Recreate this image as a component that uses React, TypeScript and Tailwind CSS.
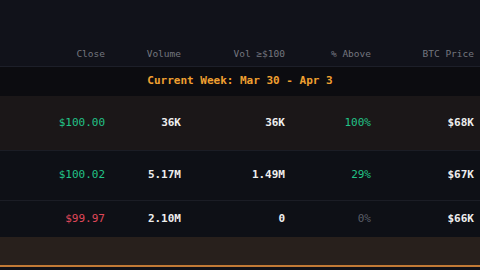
import React from 'react';

type Row = {
  close: string;
  up: boolean;
  volume: string;
  volAbove: string;
  pct: string;
  pctTone: 'up' | 'none';
  btc: string;
  height: string;
  bg: string;
};

const ROWS: Row[] = [
  { close: '$100.00', up: true, volume: '36K', volAbove: '36K', pct: '100%', pctTone: 'up', btc: '$68K', height: 'h-[55px]', bg: 'bg-[#1b1718]' },
  { close: '$100.02', up: true, volume: '5.17M', volAbove: '1.49M', pct: '29%', pctTone: 'up', btc: '$67K', height: 'h-[50px]', bg: 'bg-[#0e1016]' },
  { close: '$99.97', up: false, volume: '2.10M', volAbove: '0', pct: '0%', pctTone: 'none', btc: '$66K', height: 'h-[36px]', bg: 'bg-[#0e1016]' },
];

const COLS = 'grid grid-cols-[105px_76px_104px_86px_103px] items-center text-right';

export default function App() {
  return (
    <div
      className="w-[480px] h-[270px] overflow-hidden bg-[#11121a] flex flex-col"
      style={{ fontFamily: '"DejaVu Sans Mono", "Liberation Mono", monospace' }}
    >
      <div className={`${COLS} h-[67px] shrink-0 pt-[43px] text-[9.5px] text-[#74767f] border-b border-[#1d1f29]`}>
        <span>Close</span>
        <span>Volume</span>
        <span>Vol ≥$100</span>
        <span>% Above</span>
        <span>BTC Price</span>
      </div>

      <div className="h-[29px] shrink-0 bg-[#0c0c10] flex items-center justify-center text-[11px] font-bold text-[#f0a030]">
        Current Week: Mar 30 - Apr 3
      </div>

      {ROWS.map((r, i) => (
        <div
          key={i}
          className={`${COLS} ${r.height} shrink-0 ${r.bg} text-[11px] ${i < ROWS.length - 1 ? 'border-b border-[#1b1d25]' : ''}`}
        >
          <span className={r.up ? 'text-[#22c287]' : 'text-[#e0485a]'}>{r.close}</span>
          <span className="text-[#eeeeee] font-semibold">{r.volume}</span>
          <span className="text-[#eeeeee] font-semibold">{r.volAbove}</span>
          <span className={r.pctTone === 'up' ? 'text-[#22c287]' : 'text-[#5b5e68]'}>{r.pct}</span>
          <span className="text-[#eeeeee] font-semibold">{r.btc}</span>
        </div>
      ))}

      <div className="h-[30px] shrink-0 bg-[#28201c] border-b-2 border-[#c27a36]" />
    </div>
  );
}
